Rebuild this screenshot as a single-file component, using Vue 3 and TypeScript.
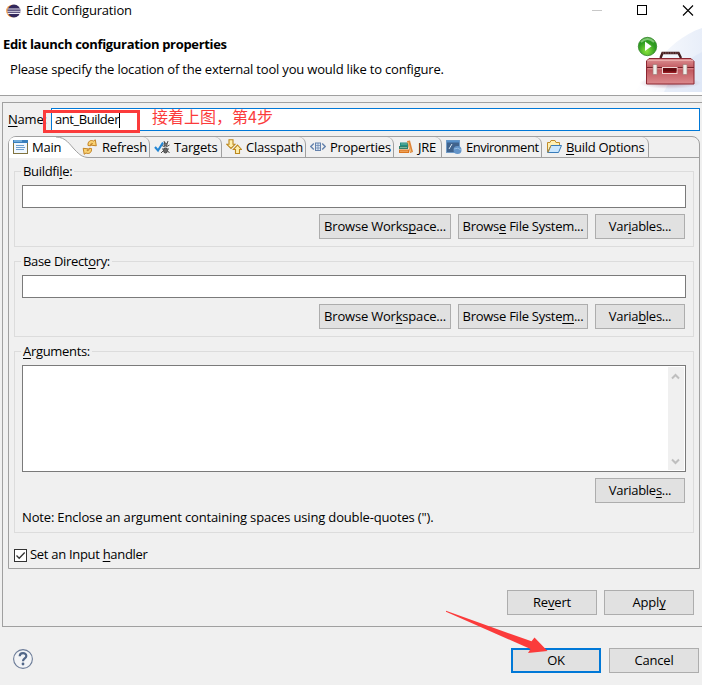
<script setup lang="ts">
import { ref } from 'vue'

interface Caption { pre: string; key: string; post: string }
interface ActionButton extends Caption { width: number }
interface Tab extends Caption { id: string; width: number }

const cap = (text: string): Caption => {
  const [pre, rest = ''] = text.split('&')
  return { pre, key: rest.slice(0, 1), post: rest.slice(1) }
}
const btn = (text: string, width: number): ActionButton => ({ ...cap(text), width })
const tab = (id: string, text: string, width: number): Tab => ({ id, ...cap(text), width })

const tabs: Tab[] = [
  tab('main', 'Main', 73),
  tab('refresh', 'Refresh', 68),
  tab('targets', 'Targets', 72),
  tab('classpath', 'Classpath', 84),
  tab('properties', 'Properties', 88),
  tab('jre', 'JRE', 48),
  tab('environment', 'Environment', 100),
  tab('build', '&Build Options', 107),
]

const groups = [
  { title: cap('Buildfi&le:'), buttons: [btn('Browse Works&pace...', 132), btn('Brows&e File System...', 130), btn('Var&iables...', 90)] },
  { title: cap('Base Direct&ory:'), buttons: [btn('Browse Wor&kspace...', 132), btn('Browse File Syste&m...', 130), btn('Varia&bles...', 90)] },
]
const values = ref<string[]>(['', ''])
const argumentsText = ref('')
const inputHandler = ref(true)
</script>

<template>
  <div class="dialog">
    <header class="head">
      <div class="titlebar">
        <svg class="logo" width="15" height="14" viewBox="0 0 15 14">
          <circle cx="6.5" cy="7" r="6.3" fill="#f59a3c" />
          <circle cx="8" cy="7" r="6.5" fill="#33285c" />
          <path d="M1.5 5h13M1.3 7.2h13.4M1.6 9.4h12.8" stroke="#eeeaf5" stroke-width="1.1" />
        </svg>
        <span class="wtitle">Edit Configuration</span>
        <svg class="winbtns" width="104" height="12" viewBox="0 0 104 12">
          <path d="M0 5.5h10" stroke="#c8c8c8" />
          <rect x="45.5" y=".5" width="9" height="9" fill="none" stroke="#000" />
          <path d="M91 .5l10 10M101 .5l-10 10" stroke="#000" stroke-width="1.1" />
        </svg>
      </div>
      <h1>Edit launch configuration properties</h1>
      <p>Please specify the location of the external tool you would like to configure.</p>
      <svg class="banner" width="72" height="64" viewBox="630 28 72 64">
        <defs>
          <linearGradient id="sky" x1="0" x2="1"><stop offset="0" stop-color="#fff" /><stop offset="1" stop-color="#dce5f6" /></linearGradient>
          <linearGradient id="box" x1="0" x2="0" y1="0" y2="1"><stop offset="0" stop-color="#dd9294" /><stop offset=".4" stop-color="#bf555c" /><stop offset="1" stop-color="#dc8a8d" /></linearGradient>
          <radialGradient id="ball" cx=".45" cy=".75"><stop offset="0" stop-color="#8be33c" /><stop offset="1" stop-color="#2e9b21" /></radialGradient>
          <radialGradient id="shade"><stop offset="0" stop-color="#a06a80" stop-opacity=".6" /><stop offset="1" stop-color="#a06a80" stop-opacity="0" /></radialGradient>
        </defs>
        <path d="M702 28C684 34 666 48 655 66L634 92H702Z" fill="url(#sky)" opacity=".65" />
        <path d="M702 52C686 60 672 74 664 92H702Z" fill="#d5e0f5" opacity=".45" />
        <ellipse cx="670" cy="83" rx="31" ry="6" fill="url(#shade)" />
        <path d="M660.5 58l2-5h16l2.5 5" fill="none" stroke="#451e20" stroke-width="2.4" />
        <path d="M662.5 53h16" stroke="#8b6663" stroke-width="1.2" stroke-dasharray="1.5 1" />
        <path d="M649 58.5h42l3 3V84h-47.500V61Z" fill="url(#box)" stroke="#8c2631" />
        <path d="M647.500 60.500h45.500" stroke="#e9aaa9" />
        <path d="M647 67.500h47" stroke="#762028" />
        <path d="M647.500 68.800h46" stroke="#e1979a" />
        <rect x="662.500" y="67.500" width="14.500" height="6" fill="#951b21" stroke="#f0d4d2" />
        <path d="M663 68h13.500v3.500h-13.500z" fill="#63090e" />
        <rect x="653" y="64.500" width="4" height="10" fill="#eeeeea" stroke="#a47c79" stroke-width=".7" />
        <rect x="683" y="64.500" width="4" height="10" fill="#eeeeea" stroke="#a47c79" stroke-width=".7" />
        <circle cx="647.500" cy="46.500" r="9.200" fill="url(#ball)" stroke="#36852c" stroke-width=".8" />
        <path d="M641 42q6.500-6 13 0" fill="none" stroke="#b8e5ab" stroke-width="2" opacity=".6" />
        <path d="M645 41.500v9.500l6.500-4.800z" fill="#fff" />
      </svg>
    </header>

    <main class="body">
      <div class="namerow">
        <label for="launch-name"><u>N</u>ame:</label>
        <div id="launch-name" class="nameinput"><span class="nametext">ant_Builder</span><i class="caret"></i></div>
        <div class="redbox"></div>
        <span class="rednote">接着上图，第4步</span>
      </div>

      <section class="folder">
        <nav class="tabs">
          <div v-for="t in tabs" :key="t.id" class="tab" :class="t.id" :style="{ width: t.width + 'px' }">
            <svg v-if="t.id === 'main'" class="curve" width="80" height="21" viewBox="0 0 80 21">
              <path d="M0 21V7Q0 0 7 0H47C57 0 61 8 66 13S73 20 79 20.500V21Z" fill="#fff" />
              <path d="M47 0C57 0 61 8 66 13S73 20 79 20.500" fill="none" stroke="#a0a0a0" />
            </svg>
            <svg class="ticon" width="16" height="16" viewBox="0 0 16 16">
              <g v-if="t.id === 'main'">
                <rect x=".5" y="1.500" width="14" height="13" fill="#eff7ff" stroke="#81733f" />
                <path d="M0 1h15v3H0z" fill="#397fbd" /><path d="M1 2h8" stroke="#a9d7f4" />
                <path d="M3 6.500h8M3 8.500h9M3 10.500h8" stroke="#6d9fce" />
              </g>
              <g v-else-if="t.id === 'refresh'" fill="#f9d274" stroke="#bd7916" stroke-width=".9" stroke-linejoin="round">
                <path d="M6 6.500C5.500 2.500 8.500 .5 11.500 2l1.800-1.200 1 6-5.300-.6 1.500-1.700C9 4 8.300 5 8.500 6.800Z" />
                <path d="M9.500 9.500c.5 4-2.500 6-5.500 4.500L2.200 15.300 1.200 9.300l5.300.6L5 11.600c1.500.5 2.200-.5 2-2.300Z" />
              </g>
              <g v-else-if="t.id === 'targets'" fill="none">
                <g stroke="#4c4c4c"><path d="M10 2l1 3M14 2l-1 3M7 6l4 2M15.500 6L12 8M7 14l4-4M15.500 14L12 10M8 10h7" /><ellipse cx="11.500" cy="5.500" rx="1.500" ry="1.500" fill="#777" /><ellipse cx="11.500" cy="11.500" rx="2" ry="2.500" fill="#666" /></g>
                <path d="M1 8l3 3.500 5-8" stroke="#2386d4" stroke-width="2.100" />
              </g>
              <g v-else-if="t.id === 'classpath'" fill="#fff0ae" stroke="#bc881e" stroke-width="1.100">
                <path d="M3 .8h4v4.500h2L5 9.500.8 5.300H3z" /><path d="M9.500 14.500v-4H7.300L11.500 6l4 4.500h-2v4z" />
              </g>
              <g v-else-if="t.id === 'properties'" fill="none" stroke="#6482ad">
                <path d="M3.800 4.500L.8 7.500l3 3M12.200 4.500l3 3-3 3" stroke-width="1.400" /><rect x="5.500" y="4" width="5" height="7.500" fill="#dbe6f4" /><path d="M8 4v7M5.500 6.500h5M5.500 9h5" stroke-width=".7" />
              </g>
              <g v-else-if="t.id === 'jre'">
                <path d="M2 3.500h8v3.500H2z" fill="#208e83" /><path d="M1 7h9v3H1z" fill="#347f69" /><path d="M1 10.500h10V14H1z" fill="#dc761f" /><path d="M3 5h6M2 8.500h7" stroke="#75b8a2" /><path d="M2 12.200h8" stroke="#f3b36f" /><path d="M9 2l3-.6L15 13l-3 1z" fill="#dd8438" /><path d="M10 3l3 10" stroke="#f1bf78" />
              </g>
              <g v-else-if="t.id === 'environment'">
                <rect x=".5" y="1.500" width="13" height="12" fill="#40638d" stroke="#719bc7" /><path d="M1 2.500h12" stroke="#5791ca" stroke-width="2" /><path d="M3 10l3-5" stroke="#dce9f5" /><circle cx="11.500" cy="11" r="4" fill="#6394c9" /><path d="M8 10q4-2 7 1" fill="none" stroke="#94bde2" />
              </g>
              <g v-else>
                <path d="M1.500 13V3.500H4l1-2h4l1 2h3.500V6" fill="#fff0b3" stroke="#c08d2c" /><path d="M1.500 13.500L5 6.500h10.500l-3 7z" fill="#cae7ff" stroke="#397cba" /><path d="M2 13.500L5 6.500" stroke="#c08d2c" />
              </g>
            </svg>
            <span>{{ t.pre }}<u>{{ t.key }}</u>{{ t.post }}</span>
          </div>
        </nav>

        <div class="panel">
          <fieldset v-for="(g, i) in groups" :key="i" class="group">
            <div class="legend">{{ g.title.pre }}<u>{{ g.title.key }}</u>{{ g.title.post }}</div>
            <input v-model="values[i]" type="text" />
            <div class="row">
              <button v-for="(b, j) in g.buttons" :key="j" :style="{ width: b.width + 'px' }">{{ b.pre }}<u>{{ b.key }}</u>{{ b.post }}</button>
            </div>
          </fieldset>
          <fieldset class="group args">
            <div class="legend"><u>A</u>rguments:</div>
            <div class="area">
              <textarea v-model="argumentsText"></textarea>
              <div class="scroll">
                <svg width="9" height="7" viewBox="0 0 9 7"><path d="M1 5.500l3.500-3.500L8 5.500" /></svg>
                <svg width="9" height="7" viewBox="0 0 9 7"><path d="M1 1.500l3.500 3.500L8 1.500" /></svg>
              </div>
            </div>
            <div class="row"><button class="b90">Variable<u>s</u>...</button></div>
            <div class="note">Note: Enclose an argument containing spaces using double-quotes (").</div>
          </fieldset>
          <div class="check" @click="inputHandler = !inputHandler">
            <svg width="13" height="13" viewBox="0 0 13 13"><rect x=".5" y=".5" width="12" height="12" fill="#fff" stroke="#333" /><path v-if="inputHandler" d="M2.500 6.500l2.700 2.800L10.700 3.500" fill="none" stroke="#333" stroke-width="1.300" /></svg>
            <span>Set an Input <u>h</u>andler</span>
          </div>
        </div>
      </section>
      <div class="row apply"><button class="b90">Re<u>v</u>ert</button><button class="b90">Appl<u>y</u></button></div>
    </main>

    <footer class="foot">
      <svg class="help" width="20" height="20" viewBox="0 0 20 20"><circle cx="10" cy="10" r="9.400" fill="#f3f4f6" stroke="#6c7c98" stroke-width="1.100" /><path d="M6.700 7.300C6.800 3.200 13.300 3.200 13.300 7c0 2.500-3.300 2.400-3.300 5.200" fill="none" stroke="#526788" stroke-width="2.200" /><circle cx="10" cy="15" r="1.400" fill="#526788" /></svg>
      <button class="b90 ok">OK</button><button class="b90">Cancel</button>
    </footer>
    <svg class="arrow" width="104" height="46" viewBox="444 609 104 46"><path d="M446 610.800L531.500 641.300 534.500 637.500 547.500 651 528 653 530.500 649 446 611.800Z" fill="#fb3b3b" /></svg>
  </div>
</template>

<style>
body { margin: 0; overflow: hidden; }
</style>
<style scoped>
* { box-sizing: border-box; }
.dialog { position: relative; width: 702px; height: 685px; overflow: hidden; background: #f0f0f0; color: #000; font: 13px/18px "Open Sans", "Noto Sans", sans-serif; letter-spacing: -.2px; white-space: nowrap; }
u { text-underline-offset: 2px; text-decoration-thickness: 1px; text-decoration-skip-ink: none; }
.head { position: relative; height: 96px; background: #fff; border-bottom: 1px solid #a0a0a0; }
.titlebar { display: flex; align-items: flex-start; height: 22px; padding-left: 6px; }
.logo { margin: 4px 5px 0 0; }
.wtitle { margin-top: 1px; }
.winbtns { margin: 5px 6px 0 auto; }
h1 { margin: 13px 0 0 3px; font-size: 13px; line-height: 18px; font-weight: 700; letter-spacing: -.32px; }
p { margin: 7px 0 0 10px; letter-spacing: -.19px; }
.banner { position: absolute; right: 0; top: 28px; }
.body { height: 525px; margin: 6px -2px 0 2px; border: 1px solid #a0a0a0; padding: 5px 4px 0 5px; }
.namerow { position: relative; display: flex; height: 23px; width: 692px; }
.namerow label { width: 43px; padding-top: 2px; }
.nameinput { display: flex; flex: 1; border: 1px solid #0078d7; background: #fff; padding: 1px 0 0 3px; letter-spacing: -.45px; }
.caret { width: 1px; height: 15px; margin-top: 3px; background: #000; }
.redbox { position: absolute; left: 35px; top: 2px; width: 97px; height: 23px; border: 3px solid #fb3b3b; z-index: 2; }
.rednote { position: absolute; left: 144px; top: -3px; color: #fb3b3b; font: 400 16px/23px "Noto Sans CJK SC", sans-serif; letter-spacing: 0; }
.folder { width: 692px; height: 433px; margin-top: 5px; border: 1px solid #a0a0a0; border-radius: 8px 8px 0 0; }
.tabs { display: flex; height: 21px; border-bottom: 1px solid #a0a0a0; }
.tab { position: relative; display: flex; height: 20px; padding: 1px 0 0 4px; border-right: 1px solid #a0a0a0; border-radius: 0 7px 0 0; }
.tab.main { height: 21px; border: 0; padding-left: 4px; }
.tab span { position: relative; margin-left: 4px; }
.tab.main span { margin-left: 3px; }
.tab.refresh { padding-left: 0; }
.tab.environment span { letter-spacing: -.5px; }
.tab.build span { letter-spacing: -.3px; }
.curve { position: absolute; left: 0; top: 0; }
.ticon { position: relative; flex: none; margin-top: 1px; }
.panel { padding: 13px 5px 0; }
.group { position: relative; min-width: 0; height: 76px; margin: 0 0 14px; padding: 13px 7px 0; border: 1px solid #dcdcdc; }
.legend { position: absolute; left: 6px; top: -10px; padding: 0 2px; background: #f0f0f0; letter-spacing: -.32px; }
input { display: block; width: 664px; height: 23px; border: 1px solid #7a7a7a; background: #fff; outline: 0; }
.row { display: flex; justify-content: flex-end; gap: 7px; margin-top: 6px; padding-right: 1px; }
button { height: 25px; padding: 0; border: 1px solid #adadad; background: #e1e1e1; color: #000; font: inherit; letter-spacing: inherit; line-height: 21px; }
.group button { letter-spacing: -.27px; }
.group button:first-child:not(.b90) { letter-spacing: -.2px; }
.b90 { width: 90px; }
.args { height: 182px; margin-bottom: 0; }
.area { display: flex; width: 664px; height: 107px; border: 1px solid #7a7a7a; background: #fff; }
textarea { flex: 1; border: 0; resize: none; outline: 0; }
.scroll { display: flex; flex-direction: column; justify-content: space-between; align-items: center; width: 16px; margin: 1px; padding: 6px 2px 5px 0; background: #f0f0f0; }
.scroll path { fill: none; stroke: #bfbfbf; stroke-width: 2; }
.note { margin-top: 5px; letter-spacing: -.16px; }
.check { display: flex; gap: 3px; margin-top: 13px; align-items: center; }
.check span { margin: -1px 0 1px; letter-spacing: -.3px; }
.apply { margin: 21px 1px 0 0; width: 686px; padding-right: 0; }
.foot { display: flex; padding: 21px 3px 0 13px; }
.help { margin: 1px auto 0 0; }
.ok { border: 2px solid #0078d7; margin-right: 8px; line-height: 19px; }
.arrow { position: absolute; left: 444px; top: 609px; }
</style>
